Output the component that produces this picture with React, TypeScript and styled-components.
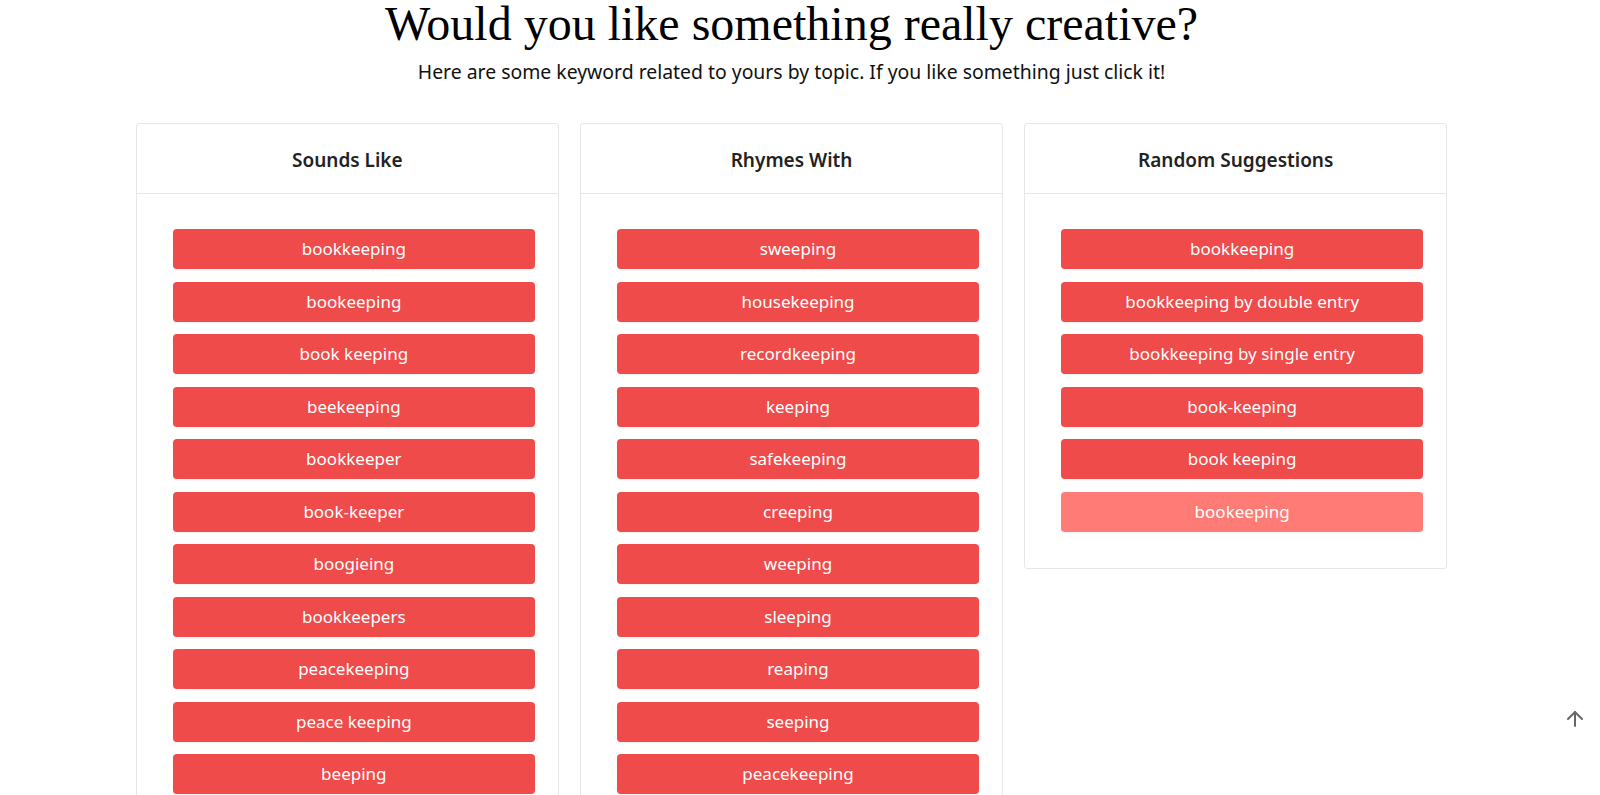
import React from "react";
import styled, { createGlobalStyle } from "styled-components";
import { ArrowUp } from "lucide-react";

const Global = createGlobalStyle`
  html, body { margin: 0; padding: 0; background: #ffffff; }
  body { font-family: "Noto Sans", "Open Sans", sans-serif; color: #212529; }
  * { box-sizing: border-box; }
`;

const Page = styled.div`
  padding-right: 17px;
`;

const Container = styled.main`
  width: 1311px;
  margin: 0 auto;
`;

const Hero = styled.header`
  display: flex;
  flex-direction: column;
  align-items: center;
`;

const Title = styled.h1`
  margin: 0;
  font-family: "Liberation Serif", "DejaVu Serif", serif;
  font-weight: 400;
  font-size: 48px;
  line-height: 48px;
  color: #000;
`;

const Subtitle = styled.p`
  margin: 10px 0 0;
  font-size: 19.4px;
  line-height: 28px;
  color: #111;
`;

const Grid = styled.section`
  margin-top: 37px;
  display: grid;
  grid-template-columns: repeat(3, 1fr);
  gap: 21.5px;
  align-items: start;
`;

const Card = styled.article`
  border: 1px solid #e6e6e6;
  border-radius: 3px;
  background: #fff;
`;

const CardHeader = styled.h2`
  margin: 0;
  height: 70px;
  padding-top: 2px;
  display: flex;
  align-items: center;
  justify-content: center;
  border-bottom: 1px solid #e6e6e6;
  font-size: 19px;
  font-weight: 600;
  color: #222;
`;

const CardBody = styled.div`
  display: flex;
  flex-direction: column;
  gap: 12.5px;
  padding: 35px 23px 36px 36px;
`;

const KeywordButton = styled.button<{ $faded?: boolean }>`
  height: 40px;
  border: none;
  border-radius: 4px;
  background: ${(p) => (p.$faded ? "#ff7b76" : "#ef4b4a")};
  color: #fff;
  font-family: inherit;
  font-size: 17px;
  line-height: 24px;
  cursor: pointer;
  box-shadow: 0 1px 2px rgba(0, 0, 0, 0.06);
`;

const ScrollTop = styled.button`
  position: fixed;
  right: 13px;
  bottom: 64px;
  width: 24px;
  height: 24px;
  padding: 0;
  border: none;
  background: transparent;
  color: #666;
  display: flex;
  align-items: center;
  justify-content: center;
  cursor: pointer;
`;

const columns: { title: string; items: string[]; faded?: number }[] = [
  {
    title: "Sounds Like",
    items: [
      "bookkeeping",
      "bookeeping",
      "book keeping",
      "beekeeping",
      "bookkeeper",
      "book-keeper",
      "boogieing",
      "bookkeepers",
      "peacekeeping",
      "peace keeping",
      "beeping",
    ],
  },
  {
    title: "Rhymes With",
    items: [
      "sweeping",
      "housekeeping",
      "recordkeeping",
      "keeping",
      "safekeeping",
      "creeping",
      "weeping",
      "sleeping",
      "reaping",
      "seeping",
      "peacekeeping",
    ],
  },
  {
    title: "Random Suggestions",
    items: [
      "bookkeeping",
      "bookkeeping by double entry",
      "bookkeeping by single entry",
      "book-keeping",
      "book keeping",
      "bookeeping",
    ],
    faded: 5,
  },
];

export default function App() {
  return (
    <Page>
      <Global />
      <Container>
        <Hero>
          <Title>Would you like something really creative?</Title>
          <Subtitle>
            Here are some keyword related to yours by topic. If you like something just click it!
          </Subtitle>
        </Hero>
        <Grid>
          {columns.map((col) => (
            <Card key={col.title}>
              <CardHeader>{col.title}</CardHeader>
              <CardBody>
                {col.items.map((item, i) => (
                  <KeywordButton key={item + i} $faded={col.faded === i}>
                    {item}
                  </KeywordButton>
                ))}
              </CardBody>
            </Card>
          ))}
        </Grid>
      </Container>
      <ScrollTop aria-label="Back to top">
        <ArrowUp size={24} strokeWidth={2} />
      </ScrollTop>
    </Page>
  );
}
